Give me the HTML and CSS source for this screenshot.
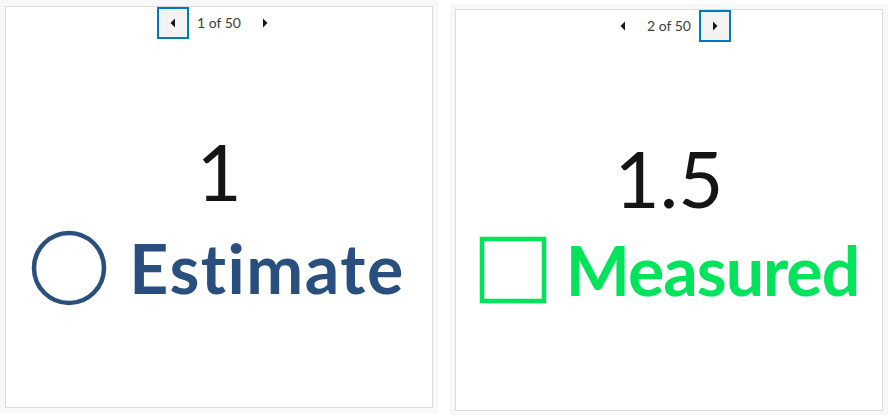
FILE: index.html
```html
<!DOCTYPE html>
<html lang="en">
<head>
<meta charset="utf-8">
<title>Cards</title>
<link rel="stylesheet" href="styles.css">
</head>
<body>
<div class="board">
  <div class="panel panel--left">
    <div class="card">
      <div class="pager">
        <button class="pager-btn pager-btn--focus" aria-label="Previous">
          <svg width="6" height="10" viewBox="0 0 6 10"><path d="M5 0.5 L0.5 5 L5 9.5 Z" fill="#151515"/></svg>
        </button>
        <span class="pager-text">1 of 50</span>
        <button class="pager-btn" aria-label="Next">
          <svg width="6" height="10" viewBox="0 0 6 10"><path d="M1 0.5 L5.5 5 L1 9.5 Z" fill="#151515"/></svg>
        </button>
      </div>
      <div class="content content--left">
        <div class="value">1</div>
        <div class="label label--estimate">
          <svg class="symbol" width="76" height="76" viewBox="0 0 76 76"><circle cx="38" cy="38" r="35" fill="none" stroke="#284f7d" stroke-width="4.5"/></svg>
          <span class="label-text">Estimate</span>
        </div>
      </div>
    </div>
  </div>
  <div class="panel panel--right">
    <div class="card">
      <div class="pager">
        <button class="pager-btn" aria-label="Previous">
          <svg width="6" height="10" viewBox="0 0 6 10"><path d="M5 0.5 L0.5 5 L5 9.5 Z" fill="#151515"/></svg>
        </button>
        <span class="pager-text">2 of 50</span>
        <button class="pager-btn pager-btn--focus" aria-label="Next">
          <svg width="6" height="10" viewBox="0 0 6 10"><path d="M1 0.5 L5.5 5 L1 9.5 Z" fill="#151515"/></svg>
        </button>
      </div>
      <div class="content content--right">
        <div class="value">1.5</div>
        <div class="label label--measured">
          <svg class="symbol" width="68" height="68" viewBox="0 0 68 68"><rect x="3" y="3" width="62" height="62" fill="none" stroke="#00e35b" stroke-width="4.5"/></svg>
          <span class="label-text">Measured</span>
        </div>
      </div>
    </div>
  </div>
</div>
</body>
</html>
```

FILE: styles.css
```css
html, body {
  margin: 0;
  padding: 0;
  background: #ffffff;
}

body {
  font-family: Lato, "Open Sans", "Liberation Sans", sans-serif;
  font-variant-ligatures: none;
  width: 888px;
  height: 415px;
  overflow: hidden;
}

.board {
  display: flex;
  gap: 12px;
  align-items: flex-start;
}

.panel {
  background: #f8f8f8;
  padding: 5px;
}

.panel--left {
  padding-top: 6px;
}

.panel--right {
  margin-top: 4px;
}

.card {
  box-sizing: border-box;
  width: 428px;
  height: 402px;
  background: #ffffff;
  border: 1px solid #dadada;
  display: flex;
  flex-direction: column;
  align-items: center;
}

.pager {
  display: flex;
  align-items: center;
  height: 32px;
}

.pager-btn {
  box-sizing: border-box;
  width: 32px;
  height: 32px;
  padding: 0;
  margin: 0;
  border: 2px solid transparent;
  background: transparent;
  display: flex;
  align-items: center;
  justify-content: center;
}

.pager-btn--focus {
  border-color: #0079c1;
  background: #f3f3f3;
}

.pager-text {
  font-size: 14px;
  color: #404040;
  margin: 0 8px;
  line-height: 1;
}

.content {
  display: flex;
  flex-direction: column;
  align-items: center;
}

.content--left {
  margin-top: 93px;
}

.content--right {
  margin-top: 97px;
}

.value {
  font-size: 78px;
  line-height: 78px;
  color: #151515;
  font-weight: 400;
}

.label {
  display: flex;
  align-items: center;
  margin-top: 20px;
}

.label-text {
  font-size: 68px;
  line-height: 68px;
  font-weight: 700;
}

.label--estimate {
  gap: 22px;
  margin-left: -2px;
}

.label--estimate .label-text {
  color: #284f7d;
  letter-spacing: 1.5px;
}

.label--measured {
  gap: 19px;
  margin-top: 19px;
}

.label--measured .label-text {
  color: #00e35b;
  letter-spacing: -1px;
}
```
